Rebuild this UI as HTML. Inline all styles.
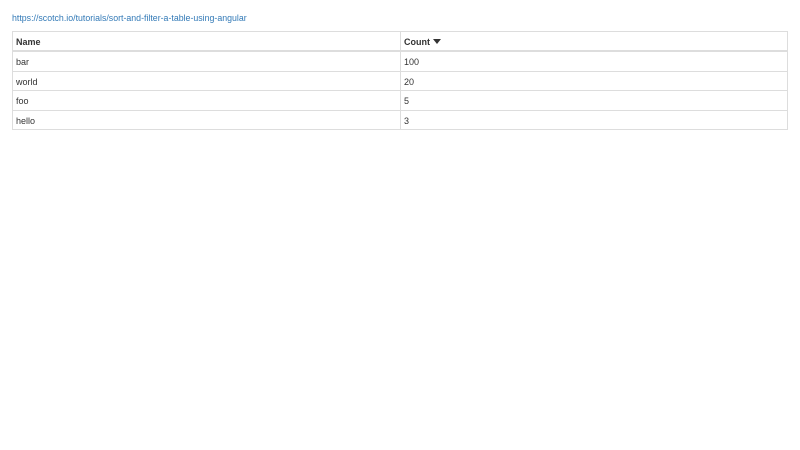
<!DOCTYPE html>
<html><head><style>
html,body{margin:0;background:#fff;font-family:"Liberation Sans",sans-serif;font-size:9px;color:#333}
a{position:absolute;left:12px;top:13px;color:#337ab7;text-decoration:none;font-size:8.8px}
table{position:absolute;left:12px;top:31px;width:776px;border-collapse:collapse;border:1px solid #ddd}
td,th{border:1px solid #ddd;padding:2px 3px 0 3px;height:16.5px;text-align:left;vertical-align:middle;line-height:12px;font-size:9px}
th{font-weight:bold;border-bottom:2px solid #ddd;height:16px}
td:first-child,th:first-child{width:381px}
.c{display:inline-block;width:0;height:0;border-left:4px solid transparent;border-right:4px solid transparent;border-top:5px solid #333;margin-left:3px;vertical-align:1px}
</style></head><body>
<a>https://scotch.io/tutorials/sort-and-filter-a-table-using-angular</a>
<table>
<tr><th>Name</th><th>Count<span class="c"></span></th></tr>
<tr><td>bar</td><td>100</td></tr>
<tr><td>world</td><td>20</td></tr>
<tr><td>foo</td><td>5</td></tr>
<tr><td>hello</td><td>3</td></tr>
</table>
</body></html>
